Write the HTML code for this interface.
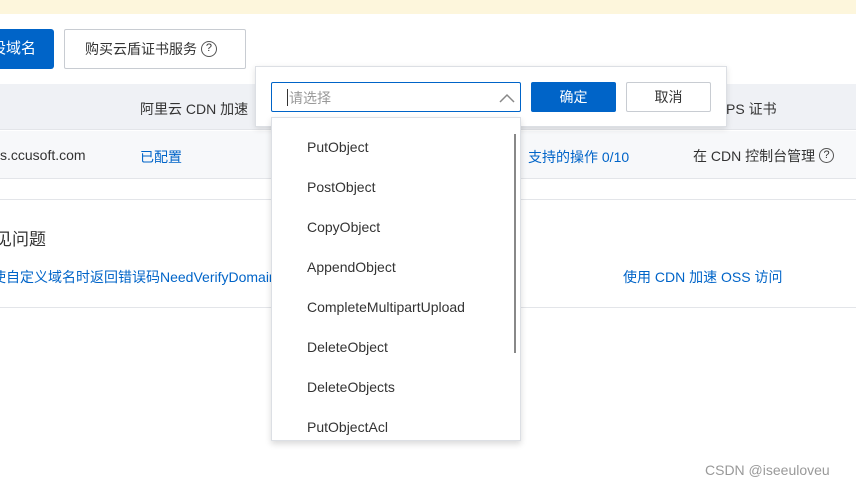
<!DOCTYPE html>
<html><head><meta charset="utf-8"><style>
*{margin:0;padding:0;box-sizing:border-box}
body{width:856px;height:487px;overflow:hidden;background:#fff;font-family:"Liberation Sans","Noto Sans CJK SC",sans-serif;font-size:14px;color:#333;position:relative}
.a{position:absolute;white-space:nowrap}
.blue{color:#0064c8}
.q{display:inline-flex;align-items:center;justify-content:center;width:16px;height:16px;border:1.3px solid #555;border-radius:50%;font-size:11px;line-height:1;vertical-align:middle;margin-top:-3px}
</style></head><body>
<div class="a" style="left:0;top:0;width:856px;height:14px;background:#fdf6dc"></div>
<div class="a" style="left:0;top:29px;width:54px;height:40px;background:#0064c8;border-radius:0 3px 3px 0;color:#fff;font-size:15px;line-height:40px;overflow:hidden"><span style="position:absolute;left:-9px">设域名</span></div>
<div class="a" style="left:64px;top:29px;width:182px;height:40px;border:1px solid #c8ccd2;border-radius:2px;line-height:38px;padding-left:20px;font-size:14px">购买云盾证书服务 <span class="q">?</span></div>
<div class="a" style="left:0;top:84px;width:856px;height:46px;background:#eff1f5;border-bottom:1px solid #e3e5e9"></div>
<div class="a" style="left:140px;top:99px">阿里云 CDN 加速</div>
<div class="a" style="left:726px;top:99px">PS 证书</div>
<div class="a" style="left:0;top:131px;width:856px;height:48px;background:#f7f8fa;border-bottom:1px solid #e3e5e9"></div>
<div class="a" style="left:0;top:147px">s.ccusoft.com</div>
<div class="a blue" style="left:140px;top:147px">已配置</div>
<div class="a blue" style="left:528px;top:147px">支持的操作 0/10</div>
<div class="a" style="left:693px;top:146px">在 CDN 控制台管理 <span class="q" style="width:15px;height:15px">?</span></div>
<div class="a" style="left:0;top:199px;width:856px;height:1px;background:#e3e5e9"></div>
<div class="a" style="left:-5px;top:225px;font-size:17px">见问题</div>
<div class="a blue" style="left:-8px;top:267px">使自定义域名时返回错误码NeedVerifyDomain</div>
<div class="a blue" style="left:623px;top:267px">使用 CDN 加速 OSS 访问</div>
<div class="a" style="left:0;top:307px;width:856px;height:1px;background:#e3e5e9"></div>
<div class="a" style="left:705px;top:462px;color:#999;font-size:14px">CSDN @iseeuloveu</div>
<div class="a" style="left:255px;top:66px;width:472px;height:61px;background:#fff;border:1px solid #dcdfe4;box-shadow:0 2px 6px rgba(0,0,0,.12)"></div>
<div class="a" style="left:271px;top:82px;width:250px;height:30px;border:1px solid #0064c8;border-radius:2px;background:#fff"></div>
<div class="a" style="left:287px;top:89px;width:1px;height:17px;background:#333"></div>
<div class="a" style="left:289px;top:88px;color:#999;font-size:14px">请选择</div>
<svg class="a" style="left:497px;top:91px" width="22" height="14"><path d="M3 11 L10 4 L17 11" fill="none" stroke="#888" stroke-width="1.5"/></svg>
<div class="a" style="left:531px;top:82px;width:85px;height:30px;background:#0064c8;border-radius:2px;color:#fff;text-align:center;line-height:30px">确定</div>
<div class="a" style="left:626px;top:82px;width:85px;height:30px;border:1px solid #c8ccd2;border-radius:2px;text-align:center;line-height:28px">取消</div>
<div class="a" style="left:271px;top:117px;width:250px;height:324px;background:#fff;border:1px solid #dcdfe4;box-shadow:0 3px 6px rgba(0,0,0,.15);overflow:hidden">
<div style="position:absolute;left:242px;top:16px;width:2px;height:219px;background:#888"></div>
<div style="padding-left:35px;padding-top:9px;line-height:40px;font-size:14px;color:#333">
<div>PutObject</div><div>PostObject</div><div>CopyObject</div><div>AppendObject</div><div>CompleteMultipartUpload</div><div>DeleteObject</div><div>DeleteObjects</div><div>PutObjectAcl</div></div>
</div>
</body></html>
